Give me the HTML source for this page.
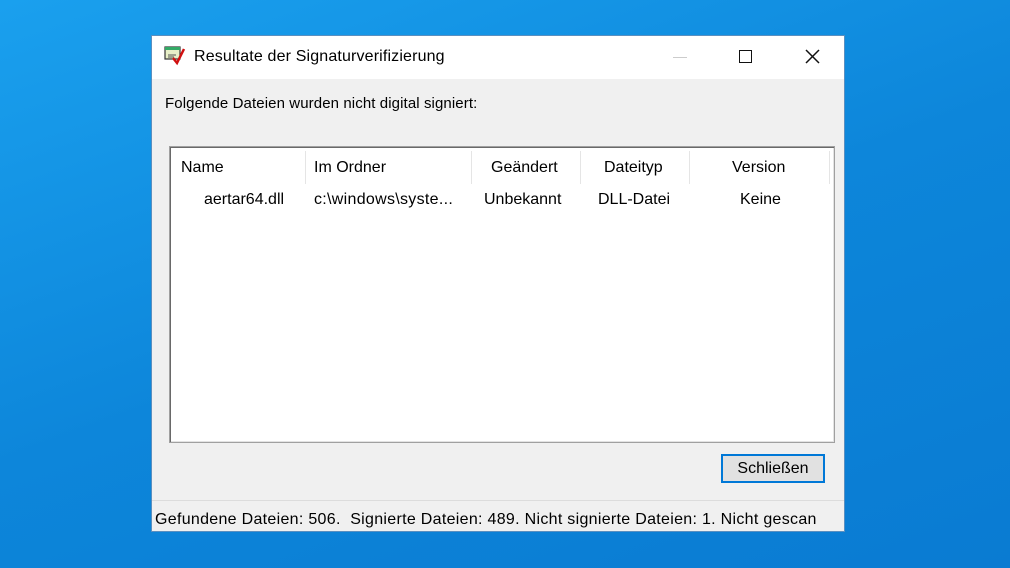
<!DOCTYPE html>
<html><head><style>
body{margin:0;width:1010px;height:568px;overflow:hidden;position:relative;
background:linear-gradient(160deg,#1aa0ee 0%,#0d86da 50%,#0a7bd2 100%);
font-family:"Liberation Sans",sans-serif;color:#000}
.win{position:absolute;left:151px;top:35px;width:694px;height:497px;background:#f0f0f0;border:1px solid #5a8fc0;box-sizing:border-box}
.title{position:absolute;left:0;top:0;width:100%;height:43px;background:#fff}
.t{position:absolute;font-size:16px;white-space:nowrap}
.list{position:absolute;left:17px;top:110px;width:664px;height:295px;background:#fff;border:1px solid #a0a0a0;box-shadow:inset 1px 1px 0 #696969,inset -1px -1px 0 #e3e3e3}
.hd{position:absolute;top:4px;height:33px;border-right:1px solid #e5e5e5}
.c{font-size:16px;position:absolute;white-space:nowrap}
.status{position:absolute;left:0;top:464px;width:100%;height:32px;border-top:1px solid #dcdcdc}
.btn{position:absolute;left:569px;top:418px;width:104px;height:29px;background:#e1e1e1;border:2px solid #0078d7;box-sizing:border-box;font-size:16px;text-align:center;line-height:25px}
</style></head><body>
<div class="win">
 <div class="title">
  <svg style="position:absolute;left:12px;top:10px" width="22" height="20" viewBox="0 0 22 20">
   <rect x="1" y="1" width="15" height="12" fill="#e8f0c8" stroke="#333" stroke-width="1.2"/>
   <rect x="1" y="1" width="15" height="3" fill="#3a6"/>
   <path d="M4 9h8M4 11h6" stroke="#555"/>
   <path d="M9 12l4 5 7-14" fill="none" stroke="#d01010" stroke-width="2.5"/>
  </svg>
  <div class="t" style="left:42px;top:12px;letter-spacing:0.15px">Resultate der Signaturverifizierung</div>
  <div style="position:absolute;left:521px;top:21px;width:14px;height:1px;background:#ccc"></div>
  <div style="position:absolute;left:587px;top:14px;width:11px;height:11px;border:1.5px solid #111"></div>
  <svg style="position:absolute;left:653px;top:13px" width="15" height="15"><path d="M1 1L14 14M14 1L1 14" stroke="#111" stroke-width="1.5"/></svg>
 </div>
 <div class="t" style="left:13px;top:59px;font-size:15px;letter-spacing:0.1px">Folgende Dateien wurden nicht digital signiert:</div>
 <div class="list">
  <div class="hd" style="left:2px;width:133px"></div>
  <div class="hd" style="left:135px;width:166px"></div>
  <div class="hd" style="left:301px;width:109px"></div>
  <div class="hd" style="left:410px;width:109px"></div>
  <div class="hd" style="left:519px;width:140px"></div>
  <div class="c" style="left:11px;top:12px">Name</div>
  <div class="c" style="left:144px;top:12px">Im Ordner</div>
  <div class="c" style="left:321px;top:12px">Geändert</div>
  <div class="c" style="left:434px;top:12px">Dateityp</div>
  <div class="c" style="left:562px;top:12px">Version</div>
  <div class="c" style="left:34px;top:44px">aertar64.dll</div>
  <div class="c" style="left:144px;top:44px;letter-spacing:0.3px">c:\windows\syste...</div>
  <div class="c" style="left:314px;top:44px">Unbekannt</div>
  <div class="c" style="left:428px;top:44px">DLL-Datei</div>
  <div class="c" style="left:570px;top:44px">Keine</div>
 </div>
 <div class="btn">Schließen</div>
 <div class="status"><div class="t" style="left:3px;top:10px;letter-spacing:0.3px">Gefundene Dateien: 506.&nbsp; Signierte Dateien: 489. Nicht signierte Dateien: 1. Nicht gescan</div></div>
</div>
</body></html>
